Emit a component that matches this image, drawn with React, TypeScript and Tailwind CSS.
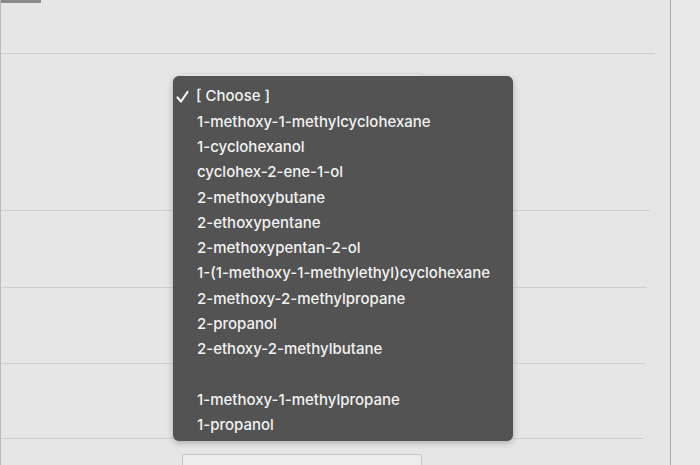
import React from "react";

const items = [
  "1-methoxy-1-methylcyclohexane",
  "1-cyclohexanol",
  "cyclohex-2-ene-1-ol",
  "2-methoxybutane",
  "2-ethoxypentane",
  "2-methoxypentan-2-ol",
  "1-(1-methoxy-1-methylethyl)cyclohexane",
  "2-methoxy-2-methylpropane",
  "2-propanol",
  "2-ethoxy-2-methylbutane",
  "",
  "1-methoxy-1-methylpropane",
  "1-propanol",
];

export default function App() {
  return (
    <div
      className="relative w-[700px] h-[465px] overflow-hidden bg-[#e7e6e6]"
      style={{ fontFamily: "Inter, 'Noto Sans', sans-serif" }}
    >
      <div className="flex h-full">
        <div className="flex flex-col w-[671px] shrink-0 border-l border-[#b9b9b9] border-r border-r-[#a9a9a9]">
          <div className="h-[54px] shrink-0 border-b border-[#cfcfcf] mr-[15px] relative">
            <div className="absolute left-0 top-0 w-[40px] h-[3px] bg-[#8a8a8a]" />
          </div>
          <div className="h-[157px] shrink-0 border-b border-[#d0d0d0] mr-[20px]" />
          <div className="h-[77px] shrink-0 border-b border-[#d0d0d0] mr-[23px]" />
          <div className="h-[76px] shrink-0 border-b border-[#d0d0d0] mr-[25px]" />
          <div className="h-[75px] shrink-0 border-b border-[#d0d0d0] mr-[27px]" />
          <div className="flex-1 min-h-0 overflow-hidden pl-[181px] pt-[15px]">
            <div className="w-[240px] h-[30px] border border-[#c4c4c4] bg-[#ededed] rounded-[2px]" />
          </div>
        </div>
        <div className="flex-1 bg-[#e9e9e9]" />
      </div>

      <div className="absolute left-[183px] top-[73px] w-[240px] h-[5px] bg-[#ececec] border-t border-r border-[#dadada] rounded-tr-[2px]" />

      <div className="absolute left-[173px] top-[76px] w-[340px] h-[365px] rounded-[6px] bg-[#535353] shadow-[0_2px_6px_rgba(0,0,0,0.25)] pt-[8px] text-[15px] text-[#f2f2f2] font-medium">
        <div className="h-[25.3px] flex items-center pl-[3px]">
          <svg width="20" height="14" viewBox="0 0 20 14" className="shrink-0">
            <path d="M1.5 7.5 L5 11.5 L11.5 2" fill="none" stroke="#f4f4f4" strokeWidth="2.2" strokeLinecap="round" strokeLinejoin="round" />
          </svg>
          <span>[ Choose ]</span>
        </div>
        {items.map((t, i) => (
          <div key={i} className="h-[25.3px] flex items-center pl-[24px] whitespace-nowrap">
            {t}
          </div>
        ))}
      </div>
    </div>
  );
}
